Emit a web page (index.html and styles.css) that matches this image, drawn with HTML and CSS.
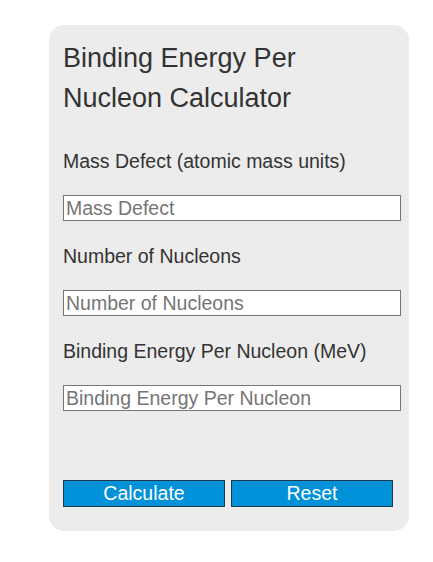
FILE: index.html
```html
<!DOCTYPE html>
<html lang="en">
  <head>
    <meta charset="UTF-8" />
    <meta name="viewport" content="width=device-width, initial-scale=1.0" />
    <title>Binding Energy Per Nucleon Calculator</title>
    <link rel="stylesheet" href="styles.css">
  </head>
  <body>
    <div class="calculator">
      <h1 class="title">Binding Energy Per Nucleon Calculator</h1>

      <label class="field-label" for="massDefect">Mass Defect (atomic mass units)</label>
      <input type="text" id="massDefect" class="field" placeholder="Mass Defect" />

      <label class="field-label" for="nucleons">Number of Nucleons</label>
      <input type="text" id="nucleons" class="field" placeholder="Number of Nucleons" />

      <label class="field-label" for="bindingEnergy">Binding Energy Per Nucleon (MeV)</label>
      <input type="text" id="bindingEnergy" class="field" placeholder="Binding Energy Per Nucleon" />

      <div class="actions">
        <button class="button" id="calcBtn">Calculate</button>
        <button class="button" id="resetBtn">Reset</button>
      </div>
    </div>
  </body>
</html>
```

FILE: styles.css
```css
body {
  font-family: "Liberation Sans", Arial, sans-serif;
  margin: 0;
  padding: 25px 0 0 49px;
  background-color: #fff;
  color: #333;
}

.calculator {
  width: 332px;
  padding: 13px 14px 24px;
  background-color: #ececec;
  border-radius: 15px;
  display: flex;
  flex-direction: column;
  align-items: flex-start;
}

.title {
  font-size: 27px;
  font-weight: normal;
  line-height: 40px;
  margin: 0 0 32px;
}

.field-label {
  font-size: 19.5px;
  line-height: 22px;
  margin-bottom: 23px;
}

.field {
  box-sizing: content-box;
  width: 100%;
  font-family: inherit;
  font-size: 19.5px;
  line-height: 22px;
  height: 22px;
  padding: 1px 2px;
  margin: 0 0 24px;
  border: 1px solid #767676;
  background-color: #fff;
  color: #333;
}

.field::placeholder {
  color: #757575;
}

.actions {
  display: flex;
  gap: 6px;
  margin-top: 45px;
}

.button {
  width: 162px;
  height: 27px;
  padding: 0;
  font-family: inherit;
  font-size: 19.5px;
  color: #fff;
  background-color: #0091d9;
  border: 1px solid #1d3b4c;
  cursor: pointer;
}
```
